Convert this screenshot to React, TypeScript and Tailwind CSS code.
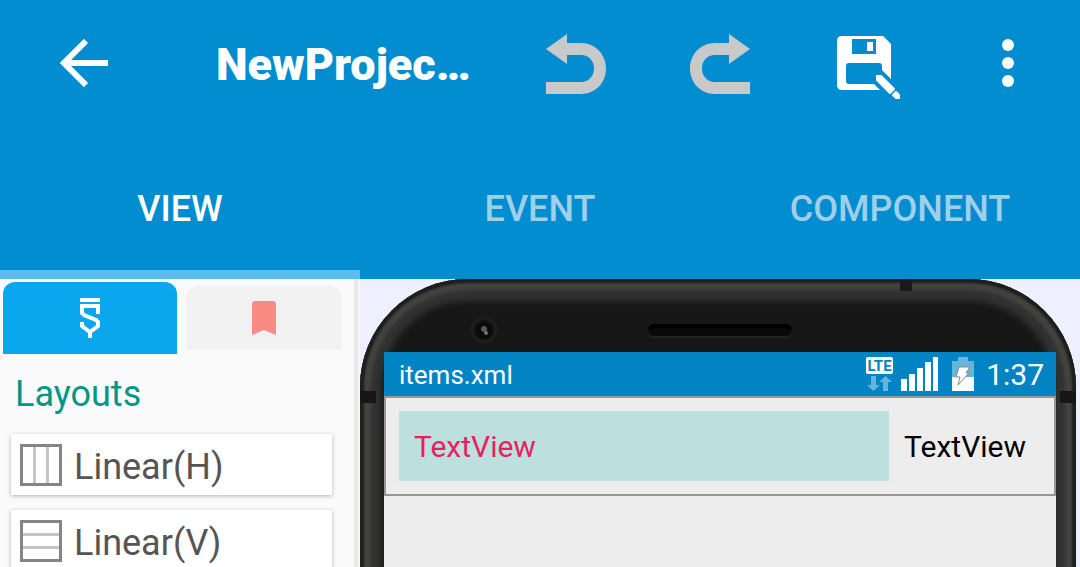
import { useState } from 'react';

const tabs = ['VIEW', 'EVENT', 'COMPONENT'];

const palette = [
  { name: 'Linear(H)', lines: 'M14.5 3v36M27.5 3v36' },
  { name: 'Linear(V)', lines: 'M3 14.5h36M3 27.5h36' },
];

function BackIcon() {
  return (
    <svg width="48" height="48" viewBox="0 0 48 48" fill="none" stroke="#fff" strokeWidth="6">
      <path d="M48 24H6M26 2L4 24L26 46" />
    </svg>
  );
}

function UndoIcon({ flipped = false }: { flipped?: boolean }) {
  return (
    <svg width="60" height="60" viewBox="0 0 60 60" fill="#c9c9c9">
      <g transform={flipped ? 'translate(60 0) scale(-1 1)' : undefined}>
        <path d="M0 15L21 0V9H35C49 9 60 20 60 34.500S49 60 35 60H0V48H35C43 48 48 42 48 34.500S43 21 35 21H21V30Z" />
      </g>
    </svg>
  );
}

function SaveIcon() {
  return (
    <svg width="64" height="64" viewBox="0 0 64 64">
      <path
        fill="#fff"
        fillRule="evenodd"
        d="M5 0H46L54 8V43L45 34V30Q45 27 42 27H12Q9 27 9 30V45Q9 48 12 48H37L43 54H5Q0 54 0 49V5Q0 0 5 0ZM15 3V18H39V3ZM30 6H36V15H30Z"
      />
      <path
        fill="#fff"
        stroke="#fff"
        strokeWidth="2"
        strokeLinejoin="round"
        d="M40 40H44L57 53L53 57L40 44ZM59 56L62 59V62H59L56 59Z"
      />
    </svg>
  );
}

function MoreIcon() {
  return (
    <svg width="12" height="50" viewBox="0 0 12 50" fill="#fff">
      <circle cx="6" cy="7" r="6" />
      <circle cx="6" cy="25" r="6" />
      <circle cx="6" cy="43" r="6" />
    </svg>
  );
}

function PencilIcon() {
  return (
    <svg width="20" height="40" viewBox="0 0 20 40" fill="none" stroke="#fff" strokeWidth="4">
      <path d="M0 2H20" />
      <path d="M18 16V8H2V15L4 17L16 22L18 24V28L10 34L2 28V24" />
      <path d="M10 33V40" />
    </svg>
  );
}

function BookmarkIcon() {
  return (
    <svg width="24" height="34" viewBox="0 0 24 34" fill="#f98b84">
      <path d="M3 0H21Q24 0 24 3V34L12 29L0 34V3Q0 0 3 0Z" />
    </svg>
  );
}

function LteIcon() {
  return (
    <svg width="27" height="36" viewBox="0 0 27 36">
      <rect y="1" width="27" height="17" rx="2" fill="#fff" />
      <text
        x="13.500"
        y="15"
        textAnchor="middle"
        fontSize="15"
        fontWeight="700"
        fontFamily="Roboto, sans-serif"
        fill="#0284c4"
      >
        LTE
      </text>
      <path fill="#66b5dd" d="M5 20H10V29H14L7.500 35L1 29H5ZM17 35V26H13L19.500 20L26 26H22V35Z" />
    </svg>
  );
}

function SignalIcon() {
  return (
    <svg width="37" height="36" viewBox="0 0 37 36" fill="#fff">
      <path d="M0 23h6v12H0zM8 18h6v17H8zM16 12h6v23h-6zM24 6h6v29h-6zM32 1h5v34h-5z" />
    </svg>
  );
}

function BatteryIcon() {
  return (
    <svg width="22" height="36" viewBox="0 0 22 36">
      <path fill="#66b5dd" d="M6 1H16V5H22V21H0V5H6Z" />
      <path fill="#fff" d="M0 21H22V35H0Z" />
      <path fill="#fff" stroke="#888" d="M7 11H18L14 17H17L6 29L8 21H4Z" />
    </svg>
  );
}

function Camera() {
  return (
    <svg width="28" height="28" viewBox="0 0 28 28">
      <circle cx="14" cy="14" r="12" fill="#131313" stroke="#1e1e1e" strokeWidth="3" />
      <circle cx="14" cy="14" r="8" fill="#0a0a0a" />
      <circle cx="14" cy="13" r="3" fill="#555b60" />
      <circle cx="16" cy="17" r="2" fill="#77784f" />
    </svg>
  );
}

function Sidebar() {
  return (
    <aside className="w-1/3 shrink-0 overflow-hidden border-r-2 border-[#f6f6f8] bg-[#fafafa]">
      <div className="h-full border-r-4 border-[#e8e8e8] pt-[3px]">
        <div className="flex items-center gap-[9px] pr-3 pl-[3px]">
          <button
            type="button"
            aria-label="Widgets"
            className="flex h-[72px] w-[174px] items-center justify-center rounded-t-xl bg-[#0aa6ee]"
          >
            <PencilIcon />
          </button>
          <button
            type="button"
            aria-label="Favorites"
            className="flex h-16 flex-1 items-center justify-center rounded-t-xl bg-[#f2f2f2]"
          >
            <BookmarkIcon />
          </button>
        </div>

        <h2 className="mt-4 pl-[15px] text-[36px] leading-[48px] text-[#009688]">Layouts</h2>

        <ul className="mt-4 space-y-[15px] pr-[22px] pl-[11px]">
          {palette.map((item) => (
            <li
              key={item.name}
              className="flex h-[61px] items-center gap-3 bg-white pl-[9px] text-[36px] text-[#555] shadow-[0_1px_4px_rgba(0,0,0,0.28)]"
            >
              <svg width="42" height="42" viewBox="0 0 42 42" fill="none">
                <rect x="1.500" y="1.500" width="39" height="39" stroke="#858585" strokeWidth="3" />
                <path d={item.lines} stroke="#c4c4c4" strokeWidth="3" />
              </svg>
              <span className="pt-1">{item.name}</span>
            </li>
          ))}
        </ul>
      </div>
    </aside>
  );
}

function Phone() {
  // The shell runs past the bottom edge, so only its top half is in view
  return (
    <div className="relative mr-1 -mb-12 flex min-w-0 flex-1 flex-col rounded-t-[108px] bg-[#171717] pr-5 pl-6 shadow-[inset_0_0_2px_4px_#1e1e1d,inset_0_0_3px_11px_#42423f,inset_0_0_6px_22px_#323232]">
      {/* Antenna bands */}
      <span className="absolute top-0 right-[164px] h-3 w-3 bg-[#191919]" />
      <span className="absolute top-28 left-0 h-3 w-4 bg-[#161616]" />
      <span className="absolute top-28 right-0 h-3 w-4 bg-[#161616]" />

      {/* Bezel */}
      <div className="grid h-[73px] shrink-0 grid-cols-[1fr_auto_1fr] items-center pt-[28px]">
        <div className="pl-[86px]">
          <Camera />
        </div>
        <div className="h-3 w-36 rounded-full border-t-4 border-black bg-[#090909] shadow-[0_2px_2px_#262626]" />
        <div />
      </div>

      <div className="flex flex-1 flex-col bg-[#ededed]">
        <div className="flex h-11 items-center bg-[#0284c4] pr-3 pl-[15px] text-white">
          <span className="flex-1 pt-0.5 text-[26px]">items.xml</span>
          <div className="flex items-center">
            <LteIcon />
            <span className="pr-[14px] pl-2">
              <SignalIcon />
            </span>
            <BatteryIcon />
            <span className="pl-3 text-[30px]">1:37</span>
          </div>
        </div>

        <div className="flex border-2 border-[#979797] p-[13px] text-[30px]">
          <div className="flex h-[70px] flex-1 items-center bg-[#bddfdd] px-[15px] text-[#e91e63]">TextView</div>
          <div className="flex h-[70px] items-center px-[15px] text-black">TextView</div>
        </div>
      </div>
    </div>
  );
}

export default function App() {
  const [active, setActive] = useState('VIEW');

  return (
    <div className="flex h-screen flex-col overflow-hidden bg-[#efefff] font-['Roboto',sans-serif]">
      <header className="shrink-0 bg-[#018dcf]">
        <div className="flex h-[126px] items-center">
          <button type="button" aria-label="Back" className="flex w-[168px] justify-center">
            <BackIcon />
          </button>
          <h1 className="min-w-0 flex-1 pt-1 pl-12 text-[45px] font-black whitespace-nowrap text-white">NewProjec…</h1>
          <button type="button" aria-label="Undo" className="flex w-36 justify-center pt-0.5">
            <UndoIcon />
          </button>
          <button type="button" aria-label="Redo" className="flex w-36 justify-center pt-0.5">
            <UndoIcon flipped />
          </button>
          <button type="button" aria-label="Save" className="flex w-36 justify-center pt-2.5 pl-2.5">
            <SaveIcon />
          </button>
          <button type="button" aria-label="More options" className="flex w-36 justify-center">
            <MoreIcon />
          </button>
        </div>

        <nav className="grid grid-cols-3 pt-[9px]">
          {tabs.map((tab) => (
            <button
              key={tab}
              type="button"
              onClick={() => setActive(tab)}
              className={`h-36 border-b-[9px] pt-3 text-[36px] font-medium ${
                tab === active ? 'border-[#59beee] text-white' : 'border-transparent text-[#a0cfec]'
              }`}
            >
              {tab}
            </button>
          ))}
        </nav>
      </header>

      <main className="flex min-h-0 flex-1">
        <Sidebar />
        <Phone />
      </main>
    </div>
  );
}
